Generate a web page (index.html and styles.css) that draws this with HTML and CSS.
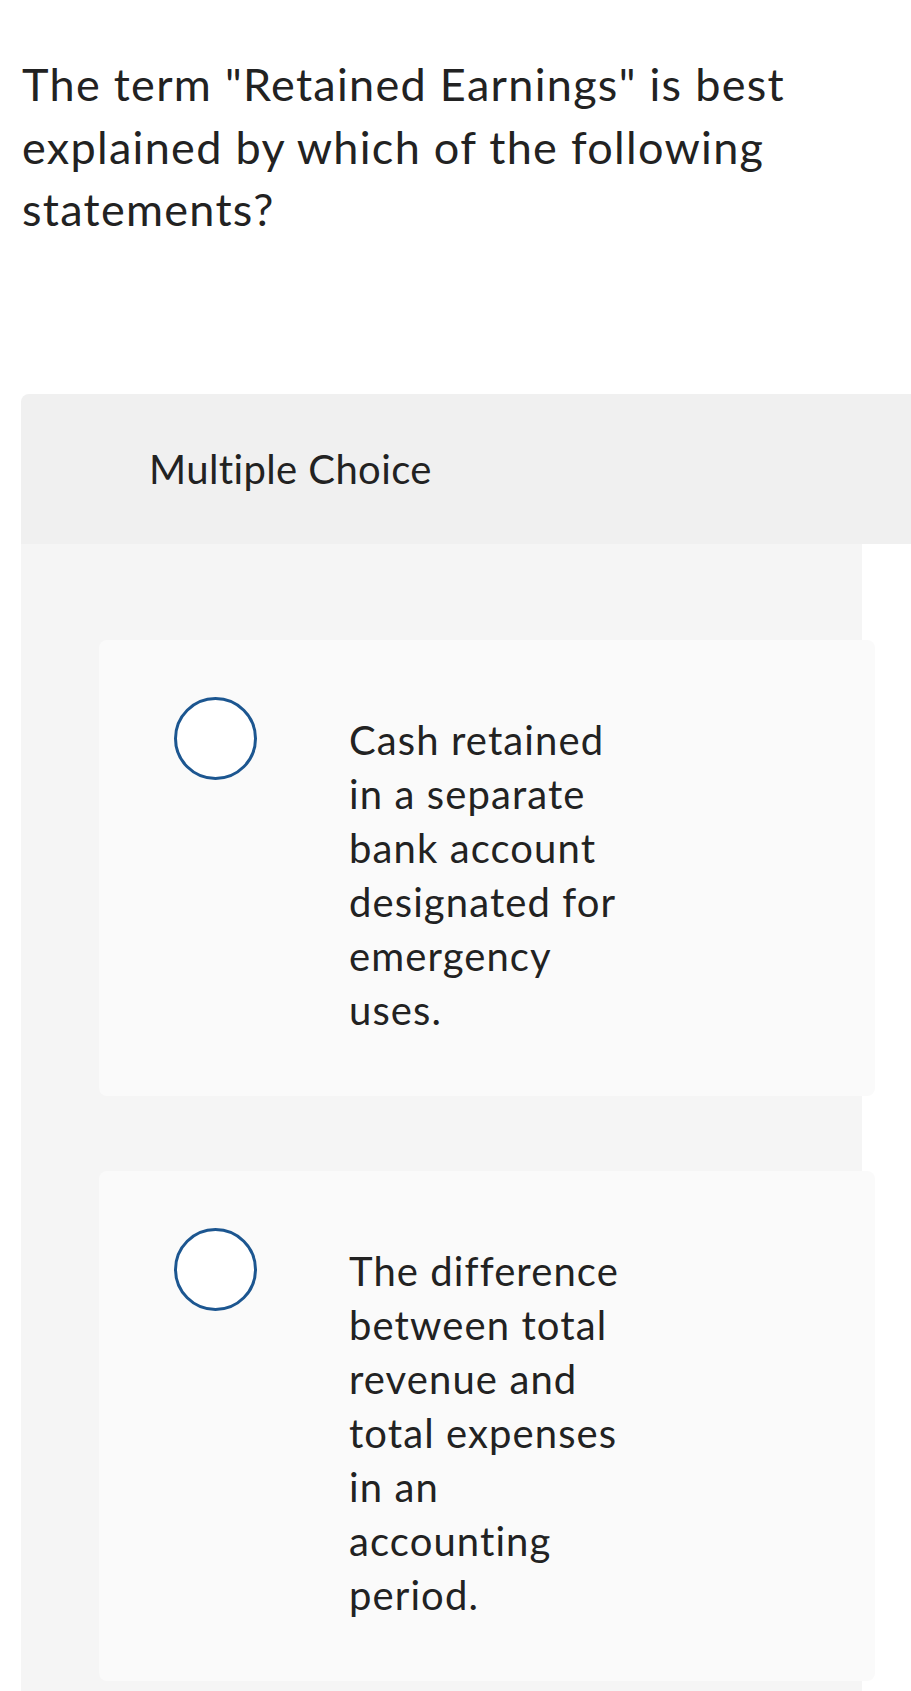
FILE: index.html
```html
<!DOCTYPE html>
<html lang="en">
<head>
<meta charset="utf-8">
<title>Multiple Choice</title>
<link rel="stylesheet" href="styles.css">
</head>
<body>
<div class="page">
  <p class="question">The term "Retained Earnings" is best explained by which of the following statements?</p>
  <section class="panel">
    <header class="panel-head">Multiple Choice</header>
    <div class="panel-body">
      <label class="choice">
        <span class="radio"></span>
        <span class="choice-text">Cash retained<br>in a separate<br>bank account<br>designated for<br>emergency<br>uses.</span>
      </label>
      <label class="choice">
        <span class="radio"></span>
        <span class="choice-text">The difference<br>between total<br>revenue and<br>total expenses<br>in an<br>accounting<br>period.</span>
      </label>
    </div>
  </section>
</div>
</body>
</html>
```
FILE: styles.css
```css
html, body {
  margin: 0;
  padding: 0;
  background: #ffffff;
}
body {
  font-family: Lato, "Open Sans", "Liberation Sans", sans-serif;
  font-variant-ligatures: none;
  color: #222222;
  overflow: hidden;
}
.page {
  width: 911px;
  height: 1691px;
  overflow: hidden;
}
.question {
  margin: 0;
  padding: 53px 40px 0 22px;
  font-size: 45px;
  line-height: 62.5px;
  letter-spacing: 1.3px;
}
.panel {
  margin: 153px 0 0 21px;
}
.panel-head {
  background: #f0f0f0;
  border-top-left-radius: 8px;
  height: 150px;
  box-sizing: border-box;
  padding: 0 0 0 128px;
  font-size: 40px;
  line-height: 54px;
  letter-spacing: 0.4px;
  display: flex;
  align-items: center;
}
.panel-body {
  width: 841px;
  background: #f5f5f5;
  padding: 96px 0 20px 78px;
  box-sizing: border-box;
  display: flex;
  flex-direction: column;
  gap: 75px;
}
.choice {
  width: 776px;
  flex: none;
  background: #fafafa;
  border-radius: 8px;
  box-sizing: border-box;
  padding: 57px 20px 59px 75px;
  display: flex;
  align-items: flex-start;
}
.radio {
  width: 83px;
  height: 83px;
  flex: none;
  box-sizing: border-box;
  border: 3px solid #1c5690;
  border-radius: 50%;
  background: #ffffff;
}
.choice-text {
  margin: 16px 0 0 92px;
  font-size: 40px;
  line-height: 54px;
  letter-spacing: 1.1px;
  white-space: nowrap;
}
```
